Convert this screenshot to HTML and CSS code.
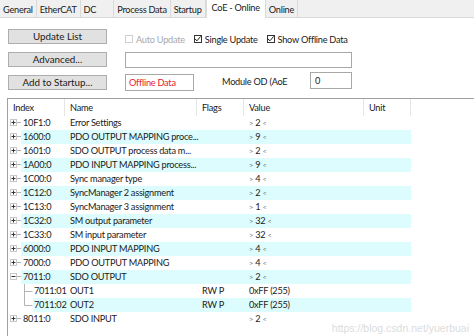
FILE: index.html
```html
<!DOCTYPE html>
<html>
<head>
<meta charset="utf-8">
<link rel="stylesheet" href="styles.css">
</head>
<body>
<div class="tabs">
  <div class="tab">General</div>
  <div class="tab">EtherCAT</div>
  <div class="tab tab-dc">DC</div>
  <div class="tab">Process Data</div>
  <div class="tab">Startup</div>
  <div class="tab active">CoE - Online</div>
  <div class="tab">Online</div>
</div>

<div class="panel">
  <div class="buttons">
    <div class="btn">Update List</div>
    <div class="btn">Advanced...</div>
    <div class="btn">Add to Startup...</div>
  </div>
  <div class="controls">
    <div class="crow checks">
      <label class="check disabled"><span class="box"></span>Auto Update</label>
      <label class="check"><span class="box"><svg width="8" height="8" viewBox="0 0 8 8"><path d="M1 4 L3 5.8 L6.6 1.4" fill="none" stroke="#222" stroke-width="1"/></svg></span>Single Update</label>
      <label class="check"><span class="box"><svg width="8" height="8" viewBox="0 0 8 8"><path d="M1 4 L3 5.8 L6.6 1.4" fill="none" stroke="#222" stroke-width="1"/></svg></span>Show Offline Data</label>
    </div>
    <div class="crow"><div class="input wide"></div></div>
    <div class="crow last">
      <div class="input offline">Offline Data</div>
      <span class="label">Module OD (AoE</span>
      <div class="input small">0</div>
    </div>
  </div>
</div>

<div class="list">
  <div class="head">
    <div class="hc">Index</div>
    <div class="hc">Name</div>
    <div class="hc">Flags</div>
    <div class="hc">Value</div>
    <div class="hc">Unit</div>
  </div>

  <div class="row">
    <div class="gutter"><svg width="13" height="14"><rect x="2.5" y="3.5" width="6" height="6" fill="#fff" stroke="#c8c8c8"/><path d="M3.5 6.5h4M5.5 4.5v4" stroke="#333"/><path d="M9 6.5h4" stroke="#b0b0b0"/></svg></div>
    <div class="cells"><span class="c idx">10F1:0</span><span class="c">Error Settings</span><span class="c"></span><span class="c"><i>&gt;</i> 2 <i>&lt;</i></span><span class="c"></span></div>
  </div>
  <div class="row">
    <div class="gutter"><svg width="13" height="14"><rect x="2.5" y="3.5" width="6" height="6" fill="#fff" stroke="#c8c8c8"/><path d="M3.5 6.5h4M5.5 4.5v4" stroke="#333"/><path d="M9 6.5h4" stroke="#b0b0b0"/></svg></div>
    <div class="cells alt"><span class="c idx">1600:0</span><span class="c">PDO OUTPUT MAPPING proce...</span><span class="c"></span><span class="c"><i>&gt;</i> 9 <i>&lt;</i></span><span class="c"></span></div>
  </div>
  <div class="row">
    <div class="gutter"><svg width="13" height="14"><rect x="2.5" y="3.5" width="6" height="6" fill="#fff" stroke="#c8c8c8"/><path d="M3.5 6.5h4M5.5 4.5v4" stroke="#333"/><path d="M9 6.5h4" stroke="#b0b0b0"/></svg></div>
    <div class="cells"><span class="c idx">1601:0</span><span class="c">SDO OUTPUT process data m...</span><span class="c"></span><span class="c"><i>&gt;</i> 2 <i>&lt;</i></span><span class="c"></span></div>
  </div>
  <div class="row">
    <div class="gutter"><svg width="13" height="14"><rect x="2.5" y="3.5" width="6" height="6" fill="#fff" stroke="#c8c8c8"/><path d="M3.5 6.5h4M5.5 4.5v4" stroke="#333"/><path d="M9 6.5h4" stroke="#b0b0b0"/></svg></div>
    <div class="cells alt"><span class="c idx">1A00:0</span><span class="c">PDO INPUT MAPPING process...</span><span class="c"></span><span class="c"><i>&gt;</i> 9 <i>&lt;</i></span><span class="c"></span></div>
  </div>
  <div class="row">
    <div class="gutter"><svg width="13" height="14"><rect x="2.5" y="3.5" width="6" height="6" fill="#fff" stroke="#c8c8c8"/><path d="M3.5 6.5h4M5.5 4.5v4" stroke="#333"/><path d="M9 6.5h4" stroke="#b0b0b0"/></svg></div>
    <div class="cells"><span class="c idx">1C00:0</span><span class="c">Sync manager type</span><span class="c"></span><span class="c"><i>&gt;</i> 4 <i>&lt;</i></span><span class="c"></span></div>
  </div>
  <div class="row">
    <div class="gutter"><svg width="13" height="14"><rect x="2.5" y="3.5" width="6" height="6" fill="#fff" stroke="#c8c8c8"/><path d="M3.5 6.5h4M5.5 4.5v4" stroke="#333"/><path d="M9 6.5h4" stroke="#b0b0b0"/></svg></div>
    <div class="cells alt"><span class="c idx">1C12:0</span><span class="c">SyncManager 2 assignment</span><span class="c"></span><span class="c"><i>&gt;</i> 2 <i>&lt;</i></span><span class="c"></span></div>
  </div>
  <div class="row">
    <div class="gutter"><svg width="13" height="14"><rect x="2.5" y="3.5" width="6" height="6" fill="#fff" stroke="#c8c8c8"/><path d="M3.5 6.5h4M5.5 4.5v4" stroke="#333"/><path d="M9 6.5h4" stroke="#b0b0b0"/></svg></div>
    <div class="cells"><span class="c idx">1C13:0</span><span class="c">SyncManager 3 assignment</span><span class="c"></span><span class="c"><i>&gt;</i> 1 <i>&lt;</i></span><span class="c"></span></div>
  </div>
  <div class="row">
    <div class="gutter"><svg width="13" height="14"><rect x="2.5" y="3.5" width="6" height="6" fill="#fff" stroke="#c8c8c8"/><path d="M3.5 6.5h4M5.5 4.5v4" stroke="#333"/><path d="M9 6.5h4" stroke="#b0b0b0"/></svg></div>
    <div class="cells alt"><span class="c idx">1C32:0</span><span class="c">SM output parameter</span><span class="c"></span><span class="c"><i>&gt;</i> 32 <i>&lt;</i></span><span class="c"></span></div>
  </div>
  <div class="row">
    <div class="gutter"><svg width="13" height="14"><rect x="2.5" y="3.5" width="6" height="6" fill="#fff" stroke="#c8c8c8"/><path d="M3.5 6.5h4M5.5 4.5v4" stroke="#333"/><path d="M9 6.5h4" stroke="#b0b0b0"/></svg></div>
    <div class="cells"><span class="c idx">1C33:0</span><span class="c">SM input parameter</span><span class="c"></span><span class="c"><i>&gt;</i> 32 <i>&lt;</i></span><span class="c"></span></div>
  </div>
  <div class="row">
    <div class="gutter"><svg width="13" height="14"><rect x="2.5" y="3.5" width="6" height="6" fill="#fff" stroke="#c8c8c8"/><path d="M3.5 6.5h4M5.5 4.5v4" stroke="#333"/><path d="M9 6.5h4" stroke="#b0b0b0"/></svg></div>
    <div class="cells alt"><span class="c idx">6000:0</span><span class="c">PDO INPUT MAPPING</span><span class="c"></span><span class="c"><i>&gt;</i> 4 <i>&lt;</i></span><span class="c"></span></div>
  </div>
  <div class="row">
    <div class="gutter"><svg width="13" height="14"><rect x="2.5" y="3.5" width="6" height="6" fill="#fff" stroke="#c8c8c8"/><path d="M3.5 6.5h4M5.5 4.5v4" stroke="#333"/><path d="M9 6.5h4" stroke="#b0b0b0"/></svg></div>
    <div class="cells"><span class="c idx">7000:0</span><span class="c">PDO OUTPUT MAPPING</span><span class="c"></span><span class="c"><i>&gt;</i> 4 <i>&lt;</i></span><span class="c"></span></div>
  </div>
  <div class="row">
    <div class="gutter"><svg width="13" height="14"><rect x="2.5" y="3.5" width="6" height="6" fill="#fff" stroke="#c8c8c8"/><path d="M3.5 6.5h4" stroke="#333"/><path d="M9 6.5h4" stroke="#b0b0b0"/></svg></div>
    <div class="cells alt"><span class="c idx">7011:0</span><span class="c">SDO OUTPUT</span><span class="c"></span><span class="c"><i>&gt;</i> 2 <i>&lt;</i></span><span class="c"></span></div>
  </div>
  <div class="row sub">
    <div class="gutter"><svg width="25" height="14"><path d="M16.5 0v14M16.5 7.5h8" stroke="#b4b4b4"/></svg></div>
    <div class="cells"><span class="c idx">7011:01</span><span class="c">OUT1</span><span class="c">RW P</span><span class="c">0xFF (255)</span><span class="c"></span></div>
  </div>
  <div class="row sub">
    <div class="gutter"><svg width="25" height="14"><path d="M16.5 0v7.5M16.5 7.5h8" stroke="#b4b4b4"/></svg></div>
    <div class="cells alt"><span class="c idx">7011:02</span><span class="c">OUT2</span><span class="c">RW P</span><span class="c">0xFF (255)</span><span class="c"></span></div>
  </div>
  <div class="row">
    <div class="gutter"><svg width="13" height="14"><rect x="2.5" y="3.5" width="6" height="6" fill="#fff" stroke="#c8c8c8"/><path d="M3.5 6.5h4M5.5 4.5v4" stroke="#333"/><path d="M9 6.5h4" stroke="#b0b0b0"/></svg></div>
    <div class="cells"><span class="c idx">8011:0</span><span class="c">SDO INPUT</span><span class="c"></span><span class="c"><i>&gt;</i> 2 <i>&lt;</i></span><span class="c"></span></div>
  </div>
</div>

<div class="watermark">https://blog.csdn.net/yuerbuai</div>
</body>
</html>
```

FILE: styles.css
```css
* { box-sizing: border-box; }
html, body { margin: 0; padding: 0; }
body {
  width: 474px;
  height: 336px;
  overflow: hidden;
  position: relative;
  background: #fff;
  font-family: "Lato", "Noto Sans", sans-serif;
  font-size: 9.2px;
  letter-spacing: -0.25px;
  color: #1a1a1a;
}

/* tabs */
.tabs {
  display: flex;
  height: 18px;
  background: #f0f0f0;
  border-bottom: 1px solid #d9d9d9;
}
.tab {
  padding: 0 3px;
  line-height: 19px;
  border-right: 1px solid #dadada;
  color: #1a1a1a;
  white-space: nowrap;
}
.tab-dc { padding-right: 17px; }
.tab.active {
  background: #fff;
  line-height: 15px;
  height: 18px;
  margin-bottom: -1px;
  padding: 0 5px;
  border-left: 1px solid #d9d9d9;
  border-right: 1px solid #d9d9d9;
}

/* top panel */
.panel {
  display: flex;
  height: 80px;
  padding: 11px 0 0 8px;
}
.buttons {
  display: flex;
  flex-direction: column;
  gap: 8px;
  width: 99px;
}
.btn {
  height: 15px;
  background: #e1e1e1;
  border: 1px solid #adadad;
  text-align: center;
  line-height: 13px;
  font-size: 9.8px;
  letter-spacing: 0;
  color: #1a1a1a;
}
.controls {
  margin-left: 18px;
  display: flex;
  flex-direction: column;
  width: 227px;
}
.crow {
  display: flex;
  align-items: center;
}
.checks {
  height: 18px;
  margin-top: 1px;
  margin-bottom: 4px;
}
.check {
  display: flex;
  align-items: center;
  margin-right: 9px;
  white-space: nowrap;
}
.box {
  width: 8px;
  height: 8px;
  border: 1px solid #333;
  background: #fff;
  margin-right: 3px;
  display: flex;
  align-items: center;
  justify-content: center;
}
.box svg { display: block; flex: none; }
.check.disabled { color: #a8a8a8; }
.check.disabled .box { border-color: #cfcfcf; }

.input {
  border: 1px solid #a8a8a8;
  background: #fff;
  height: 16px;
}
.wide { width: 227px; }
.last { margin-top: 4px; height: 19px; }
.offline {
  width: 69px;
  height: 17px;
  margin-top: 2px;
  color: #e8202a;
  padding-left: 3px;
  line-height: 15px;
}
.label {
  margin-left: 28px;
  width: 88px;
  white-space: nowrap;
}
.small {
  width: 42px;
  height: 17px;
  margin-top: -2px;
  padding-left: 4px;
  line-height: 15px;
}

/* list */
.list {
  margin-left: 7px;
  border-top: 1px solid #a0a0a0;
  border-left: 1px solid #a0a0a0;
  height: 240px;
}
.head {
  display: grid;
  grid-template-columns: 57px 132px 47px 120px 47px;
  height: 17px;
}
.hc {
  padding-left: 5px;
  line-height: 17px;
  border-right: 1px solid #e6e6e6;
}
.row {
  display: flex;
  height: 14px;
}
.gutter {
  width: 13px;
  flex: none;
}
.gutter svg { display: block; }
.cells {
  display: grid;
  grid-template-columns: 44px 132px 47px 120px 47px;
  height: 14px;
  line-height: 14px;
}
.cells.alt { background: #dcfcfd; }
.c {
  padding-left: 5px;
  white-space: nowrap;
}
.c.idx { padding-left: 2px; }
.c i {
  font-style: normal;
  font-size: 7.5px;
  color: #777;
}
.row.sub .gutter { width: 25px; }
.row.sub .cells { grid-template-columns: 32px 132px 47px 120px 47px; }
.row.sub .c.idx { padding-left: 1px; }

.watermark {
  position: absolute;
  right: 5px;
  bottom: 2px;
  font-family: "Liberation Sans", sans-serif;
  font-size: 10.5px;
  letter-spacing: 0;
  color: #dcdcdc;
}
```
